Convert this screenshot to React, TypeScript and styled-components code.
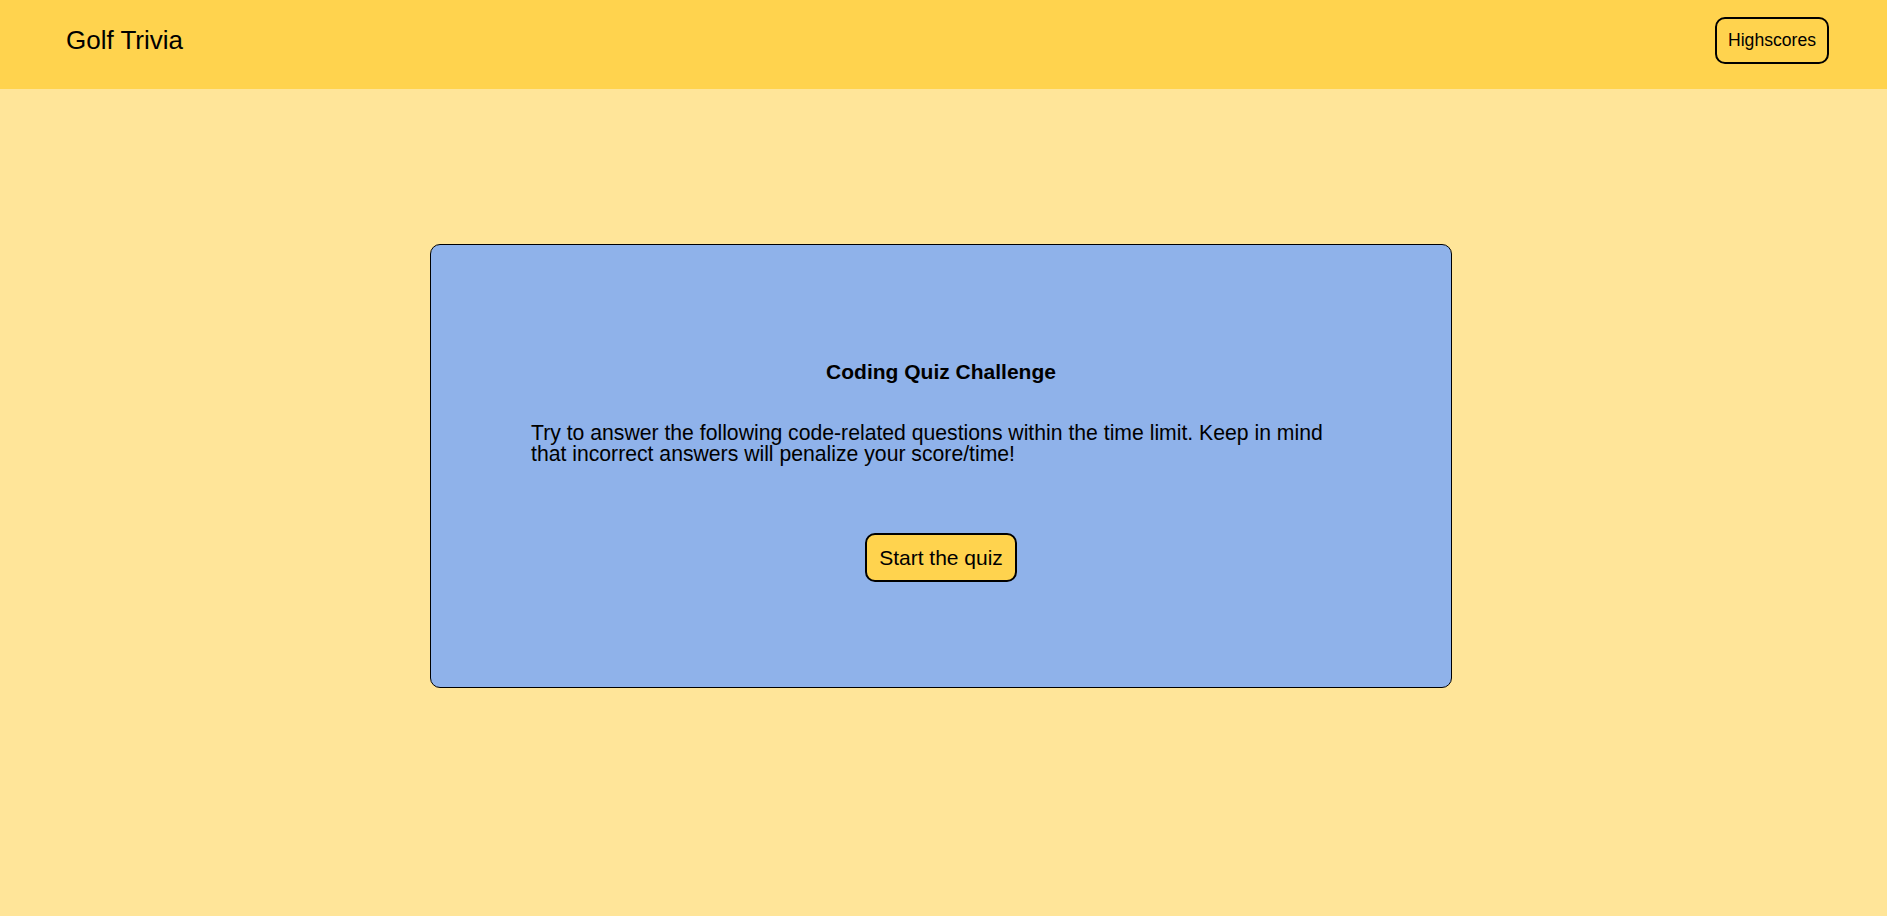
import React from "react";
import styled, { createGlobalStyle } from "styled-components";

const GlobalStyle = createGlobalStyle`
  * {
    box-sizing: border-box;
  }
  html,
  body {
    margin: 0;
    padding: 0;
    min-height: 100%;
    background-color: #ffe599;
    font-family: "Liberation Sans", Arial, sans-serif;
    color: #000;
  }
`;

function App() {
  const startQuiz = () => {
    // TODO: load the first question
  };

  return (
    <>
      <GlobalStyle />
      <Page>
        <Header>
          <Brand>Golf Trivia</Brand>
          <OutlineButton>Highscores</OutlineButton>
        </Header>
        <Main>
          <QuizCard>
            <Title>Coding Quiz Challenge</Title>
            <Intro>
              Try to answer the following code-related questions within the
              time limit. Keep in mind that incorrect answers will penalize your
              score/time!
            </Intro>
            <StartButton onClick={startQuiz}>Start the quiz</StartButton>
          </QuizCard>
        </Main>
      </Page>
    </>
  );
}

export default App;

const Page = styled.div`
  min-height: 100vh;
  display: flex;
  flex-direction: column;
  background-color: #ffe599;
`;

const Header = styled.header`
  height: 89px;
  display: flex;
  align-items: center;
  justify-content: space-between;
  padding: 0 58px 9px 66px;
  background-color: #ffd34e;
`;

const Brand = styled.h1`
  margin: 0;
  font-size: 26px;
  font-weight: 400;
`;

const OutlineButton = styled.button`
  padding: 11px;
  font-family: inherit;
  font-size: 17.6px;
  color: #000;
  background-color: transparent;
  border: 2px solid #000;
  border-radius: 10px;
  cursor: pointer;
`;

const Main = styled.main`
  display: flex;
  justify-content: center;
  padding: 155px 5px 0 0;
`;

const QuizCard = styled.section`
  width: 1022px;
  height: 444px;
  display: flex;
  flex-direction: column;
  align-items: center;
  padding: 115px 100px 0;
  background-color: #8fb2ea;
  border: 1px solid #000;
  border-radius: 10px;
`;

const Title = styled.h2`
  margin: 0;
  font-size: 21px;
  font-weight: 700;
  line-height: 23px;
  text-align: center;
`;

const Intro = styled.p`
  align-self: stretch;
  margin: 40px 0 0;
  font-size: 21.2px;
  line-height: 20.5px;
`;

const StartButton = styled.button`
  margin-top: 69px;
  padding: 10.5px 12px;
  font-family: inherit;
  font-size: 21px;
  color: #000;
  background-color: #ffd34e;
  border: 2px solid #000;
  border-radius: 10px;
  cursor: pointer;
`;
